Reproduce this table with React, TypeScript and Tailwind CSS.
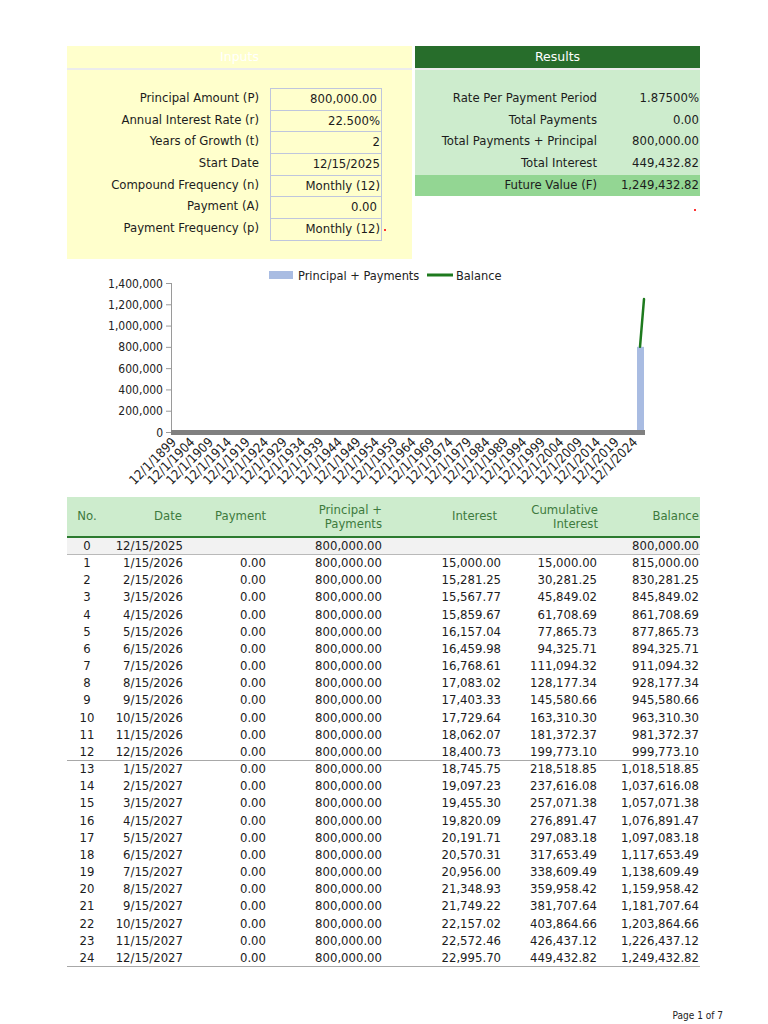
import React from "react";

const inputs: [string, string, string][] = [
  ["Principal Amount (P)", "800,000.00", "pr-[4px]"],
  ["Annual Interest Rate (r)", "22.500%", "pr-[1px]"],
  ["Years of Growth (t)", "2", "pr-[1px]"],
  ["Start Date", "12/15/2025", "pr-[1px]"],
  ["Compound Frequency (n)", "Monthly (12)", "pr-[1px]"],
  ["Payment (A)", "0.00", "pr-[4px]"],
  ["Payment Frequency (p)", "Monthly (12)", "pr-[1px]"],
];

const results: [string, string][] = [
  ["Rate Per Payment Period", "1.87500%"],
  ["Total Payments", "0.00"],
  ["Total Payments + Principal", "800,000.00"],
  ["Total Interest", "449,432.82"],
];

const rows: [number, string, string, string, string][] = [
  [1, "1/15/2026", "15,000.00", "15,000.00", "815,000.00"],
  [2, "2/15/2026", "15,281.25", "30,281.25", "830,281.25"],
  [3, "3/15/2026", "15,567.77", "45,849.02", "845,849.02"],
  [4, "4/15/2026", "15,859.67", "61,708.69", "861,708.69"],
  [5, "5/15/2026", "16,157.04", "77,865.73", "877,865.73"],
  [6, "6/15/2026", "16,459.98", "94,325.71", "894,325.71"],
  [7, "7/15/2026", "16,768.61", "111,094.32", "911,094.32"],
  [8, "8/15/2026", "17,083.02", "128,177.34", "928,177.34"],
  [9, "9/15/2026", "17,403.33", "145,580.66", "945,580.66"],
  [10, "10/15/2026", "17,729.64", "163,310.30", "963,310.30"],
  [11, "11/15/2026", "18,062.07", "181,372.37", "981,372.37"],
  [12, "12/15/2026", "18,400.73", "199,773.10", "999,773.10"],
  [13, "1/15/2027", "18,745.75", "218,518.85", "1,018,518.85"],
  [14, "2/15/2027", "19,097.23", "237,616.08", "1,037,616.08"],
  [15, "3/15/2027", "19,455.30", "257,071.38", "1,057,071.38"],
  [16, "4/15/2027", "19,820.09", "276,891.47", "1,076,891.47"],
  [17, "5/15/2027", "20,191.71", "297,083.18", "1,097,083.18"],
  [18, "6/15/2027", "20,570.31", "317,653.49", "1,117,653.49"],
  [19, "7/15/2027", "20,956.00", "338,609.49", "1,138,609.49"],
  [20, "8/15/2027", "21,348.93", "359,958.42", "1,159,958.42"],
  [21, "9/15/2027", "21,749.22", "381,707.64", "1,181,707.64"],
  [22, "10/15/2027", "22,157.02", "403,864.66", "1,203,864.66"],
  [23, "11/15/2027", "22,572.46", "426,437.12", "1,226,437.12"],
  [24, "12/15/2027", "22,995.70", "449,432.82", "1,249,432.82"],
];

const cols = "grid grid-cols-[40px_80px_85px_114px_119px_96px_99px]";

function Chart() {
  const yLabels = ["1,400,000", "1,200,000", "1,000,000", "800,000", "600,000", "400,000", "200,000", "0"];
  const top = 21;
  const bottom = 170;
  const step = (bottom - top) / 7;
  const xs = Array.from({ length: 26 }, (_, i) => i);
  return (
    <svg width="768" height="235" viewBox="0 0 768 235" className="block -ml-[67px] mt-[3px]" style={{ fontFamily: '"DejaVu Sans Condensed", "DejaVu Sans", sans-serif', fontStretch: "condensed" }}>
      <rect x="269" y="9" width="24" height="8" fill="#a9bce2" />
      <text x="298" y="17.5" fontSize="12.7" fill="#222">Principal + Payments</text>
      <line x1="427" y1="13" x2="453" y2="13" stroke="#1e7a1e" strokeWidth="3" />
      <text x="456" y="17.5" fontSize="12.7" fill="#222">Balance</text>
      <line x1="171.5" y1={top} x2="171.5" y2={bottom} stroke="#9a9a9a" strokeWidth="1" />
      {yLabels.map((l, i) => (
        <g key={l}>
          <line x1="166" y1={top + i * step + 0.5} x2="171" y2={top + i * step + 0.5} stroke="#9a9a9a" strokeWidth="1" />
          <text x="163" y={top + i * step + 4.5} fontSize="12" textAnchor="end" fill="#222">{l}</text>
        </g>
      ))}
      <rect x="637" y={bottom - (800 / 1400) * (bottom - top)} width="7" height={(800 / 1400) * (bottom - top)} fill="#a9bce2" />
      <rect x="171" y={bottom - 2} width="474" height="5" fill="#808080" />
      <line x1="640" y1={bottom - (800 / 1400) * (bottom - top)} x2="644" y2={bottom - (1249.43 / 1400) * (bottom - top)} stroke="#1e7a1e" strokeWidth="2.5" strokeLinecap="round" />
      {xs.map((i) => {
        const x = 177 + i * 18.45;
        const y = 181;
        return (
          <text key={i} x={x} y={y} fontSize="13" textAnchor="end" fill="#222" transform={`rotate(-45 ${x} ${y})`}>
            {`12/1/${1899 + i * 5}`}
          </text>
        );
      })}
    </svg>
  );
}

export default function App() {
  return (
    <div className="w-[768px] h-[1024px] bg-white relative overflow-hidden text-[11.7px] text-[#1c1c1c]" style={{ fontFamily: '"DejaVu Sans", Verdana, sans-serif' }}>
      <div className="pt-[46px] pl-[67px]">
        <div className="flex gap-[3px]">
          <div className="w-[345px] h-[213px] bg-[#ffffcc] flex flex-col relative">
            <div className="h-[22px] leading-[22px] text-center text-white text-[12.5px]">Inputs</div>
            <div className="h-[2px] bg-[#ececec]" />
            <div className="pt-[18px] flex">
              <div className="w-[192px] flex flex-col">
                {inputs.map(([l]) => (
                  <div key={l} className="h-[21.67px] leading-[21.67px] text-right">{l}</div>
                ))}
              </div>
              <div className="ml-[11px] w-[112px] flex flex-col border-t border-l border-r border-[#bfc6dd]">
                {inputs.map(([l, v, p]) => (
                  <div key={l} className={`h-[21.67px] leading-[21px] text-right border-b border-[#bfc6dd] ${p}`}>{v}</div>
                ))}
              </div>
            </div>
            <div className="absolute left-[317px] top-[183px] w-[2px] h-[2px] bg-[#ff3333]" />
          </div>
          <div className="w-[285px] flex flex-col relative">
            <div className="h-[22px] leading-[22px] text-center text-white text-[12.5px] bg-[#276d2b]">Results</div>
            <div className="h-[2px] bg-[#ececec]" />
            <div className="bg-[#cdeccd] pt-[18px]">
              {results.map(([l, v]) => (
                <div key={l} className="flex h-[21.67px] leading-[21.67px]">
                  <div className="w-[182px] text-right">{l}</div>
                  <div className="w-[102px] text-right">{v}</div>
                </div>
              ))}
              <div className="flex h-[21.67px] leading-[21.67px] bg-[#93d693]">
                <div className="w-[182px] text-right">Future Value (F)</div>
                <div className="w-[102px] text-right">1,249,432.82</div>
              </div>
            </div>
            <div className="absolute left-[279px] top-[163px] w-[2px] h-[2px] bg-[#ff3333]" />
          </div>
        </div>

        <Chart />

        <div className="w-[633px]">
          <div className={`${cols} h-[41px] bg-[#cdeccd] border-b-2 border-[#2b7a2f] text-[#3d7a3d] items-center`}>
            <div className="text-center">No.</div>
            <div className="text-right pr-[5px]">Date</div>
            <div className="text-center pl-[28px] pr-[6px]">Payment</div>
            <div className="text-right pr-[4px] leading-[14px]">Principal +<br />Payments</div>
            <div className="text-right pr-[8px]">Interest</div>
            <div className="text-right pr-[3px] leading-[14px]">Cumulative<br />Interest</div>
            <div className="text-right pr-[1px]">Balance</div>
          </div>
          <div className={`${cols} h-[17px] leading-[16px] bg-[#f2f2f2] border-b border-[#b9b9b9]`}>
            <div className="text-center">0</div>
            <div className="text-right pr-[4px]">12/15/2025</div>
            <div />
            <div className="text-right pr-[4px]">800,000.00</div>
            <div />
            <div />
            <div className="text-right pr-[1px]">800,000.00</div>
          </div>
          {rows.map(([n, d, i, c, b]) => (
            <div key={n} className={`${cols} h-[17.18px] leading-[17px] ${n === 12 || n === 24 ? "border-b border-[#a8a8a8]" : ""}`}>
              <div className="text-center">{n}</div>
              <div className="text-right pr-[4px]">{d}</div>
              <div className="text-right pr-[6px]">0.00</div>
              <div className="text-right pr-[4px]">800,000.00</div>
              <div className="text-right pr-[4px]">{i}</div>
              <div className="text-right pr-[4px]">{c}</div>
              <div className="text-right pr-[1px]">{b}</div>
            </div>
          ))}
        </div>
      </div>
      <div className="absolute right-[45px] top-[1009px] text-[10px] leading-[14px] text-[#222] font-stretch-condensed" style={{ fontFamily: '"DejaVu Sans Condensed", "DejaVu Sans", sans-serif' }}>Page 1 of 7</div>
    </div>
  );
}
